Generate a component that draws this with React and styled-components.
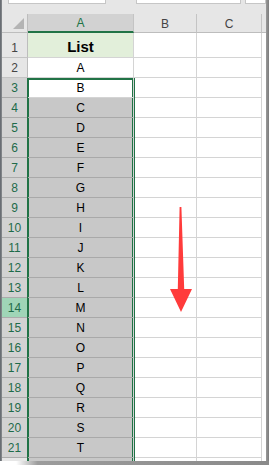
import React from "react";
import styled, { createGlobalStyle } from "styled-components";

const GlobalStyle = createGlobalStyle`
  html, body {
    margin: 0;
    padding: 0;
    background: #ffffff;
  }
  body {
    font-family: "Liberation Sans", Arial, sans-serif;
  }
`;

const GREEN = "#217346";

const Frame = styled.div`
  width: 269px;
  height: 465px;
  overflow: hidden;
  display: flex;
  flex-direction: column;
  background: #ffffff;
`;

const Window = styled.div`
  display: flex;
  height: 461px;
  overflow: hidden;
`;

const LeftEdge = styled.div`
  width: 2px;
  flex: none;
  background: linear-gradient(90deg, #5f646b, #8a8d90);
`;

const RightEdge = styled.div`
  width: 3px;
  flex: none;
  background: linear-gradient(90deg, #9a9a9a, #7c7c7c);
`;

const BottomEdge = styled.div`
  height: 4px;
  flex: none;
  background: linear-gradient(90deg, #ffffff 6%, #9c9c9c 14%, #8a8a8a 100%);
`;

const Main = styled.div`
  flex: 1;
  display: flex;
  flex-direction: column;
  overflow: hidden;
`;

const TopBar = styled.div`
  height: 14px;
  flex: none;
  background: #e6e6e6;
  display: flex;
  align-items: flex-start;
  padding-left: 6px;
  gap: 4px;
  box-sizing: border-box;
`;

const Field = styled.div`
  height: 3px;
  width: ${p => p.$w}px;
  margin-left: ${p => p.$ml || 0}px;
  background: #ffffff;
  border: 1px solid #c6c6c6;
  border-top: none;
  box-sizing: content-box;
`;

const Sheet = styled.div`
  position: relative;
  display: grid;
  grid-template-columns: 26px 106px 63px 65px 4px;
  grid-template-rows: 19px 25px;
  grid-auto-rows: 20px;
  align-content: start;
`;

const Corner = styled.div`
  background: #e6e6e6;
  border-right: 1px solid #bdbdbd;
  border-bottom: 1px solid #bdbdbd;
  box-sizing: border-box;
  position: relative;
  &::after {
    content: "";
    position: absolute;
    right: 3px;
    bottom: 3px;
    border-style: solid;
    border-width: 0 0 11px 11px;
    border-color: transparent transparent #b4b4b4 transparent;
  }
`;

const ColHead = styled.div`
  box-sizing: border-box;
  display: flex;
  align-items: center;
  justify-content: center;
  font-size: 12px;
  padding-top: 1px;
  background: ${p => (p.$active ? "#d2d2d2" : "#e6e6e6")};
  color: ${p => (p.$active ? GREEN : "#444444")};
  border-right: 1px solid #c4c4c4;
  border-bottom: ${p => (p.$active ? `2px solid ${GREEN}` : "1px solid #bdbdbd")};
`;

const HeadFill = styled.div`
  background: #e6e6e6;
  border-bottom: 1px solid #bdbdbd;
  box-sizing: border-box;
`;

const RowHead = styled.div`
  box-sizing: border-box;
  display: flex;
  align-items: flex-end;
  justify-content: center;
  font-size: 12px;
  line-height: 1;
  padding-bottom: 3px;
  background: ${p => (p.$current ? "#9fd5b7" : p.$active ? "#d2d2d2" : "#e6e6e6")};
  color: ${p => (p.$active ? "#1e6b4a" : "#444444")};
  border-right: 1px solid #bdbdbd;
  border-bottom: 1px solid ${p => (p.$active ? "#ababab" : "#c4c4c4")};
`;

const Cell = styled.div`
  box-sizing: border-box;
  display: flex;
  align-items: flex-end;
  justify-content: center;
  font-size: ${p => (p.$bold ? 15 : 12)}px;
  font-weight: ${p => (p.$bold ? 700 : 400)};
  line-height: 1;
  padding-bottom: 3px;
  color: #000000;
  background: ${p => p.$bg || "#ffffff"};
  border-right: 1px solid #d4d4d4;
  border-bottom: 1px solid ${p => (p.$shaded ? "#a9a9a9" : "#d4d4d4")};
`;

const SelCell = styled(Cell)`
  box-shadow: inset 1px 0 0 ${GREEN}, inset -1px 0 0 ${GREEN},
    -1px 0 0 ${GREEN}, 1px 0 0 ${GREEN}
    ${p => (p.$top ? `, inset 0 2px 0 ${GREEN}` : "")};
  position: relative;
  z-index: 1;
`;

const Filler = styled.div`
  background: #ffffff;
`;

/* red arrow drawn over column B */
const Arrow = styled.svg`
  position: absolute;
  left: 164px;
  top: 174px;
  z-index: 2;
`;

const letters = "BCDEFGHIJKLMNOPQRST".split("");

export default function App() {
  const rows = [];
  for (let n = 3; n <= 22; n++) {
    const letter = letters[n - 3] || "";
    const shaded = n > 3;
    rows.push(
      <React.Fragment key={n}>
        <RowHead $active={n <= 21} $current={n === 14}>
          {n <= 21 ? n : ""}
        </RowHead>
        <SelCell
          $top={n === 3}
          $shaded={shaded}
          $bg={shaded ? "#c8c8c8" : "#ffffff"}
        >
          {letter}
        </SelCell>
        <Cell />
        <Cell />
        <Filler />
      </React.Fragment>
    );
  }

  return (
    <>
      <GlobalStyle />
      <Frame>
        <Window>
          <LeftEdge />
          <Main>
            <TopBar>
              <Field $w={100} />
              <Field $w={107} $ml={26} />
              <Field $w={20} />
            </TopBar>
            <Sheet>
              <Corner />
              <ColHead $active>A</ColHead>
              <ColHead>B</ColHead>
              <ColHead>C</ColHead>
              <HeadFill />

              <RowHead>1</RowHead>
              <Cell $bold $bg="#e2efda">List</Cell>
              <Cell />
              <Cell />
              <Filler />

              <RowHead>2</RowHead>
              <Cell>A</Cell>
              <Cell />
              <Cell />
              <Filler />

              {rows}

              <Arrow width="30" height="130" viewBox="0 0 30 130">
                <path
                  d="M13.6 19 L15.4 19 L18.2 101 L26 101 L15 124 L4 101 L11.8 101 Z"
                  fill="#ff3b3b"
                />
              </Arrow>
            </Sheet>
          </Main>
          <RightEdge />
        </Window>
        <BottomEdge />
      </Frame>
    </>
  );
}
